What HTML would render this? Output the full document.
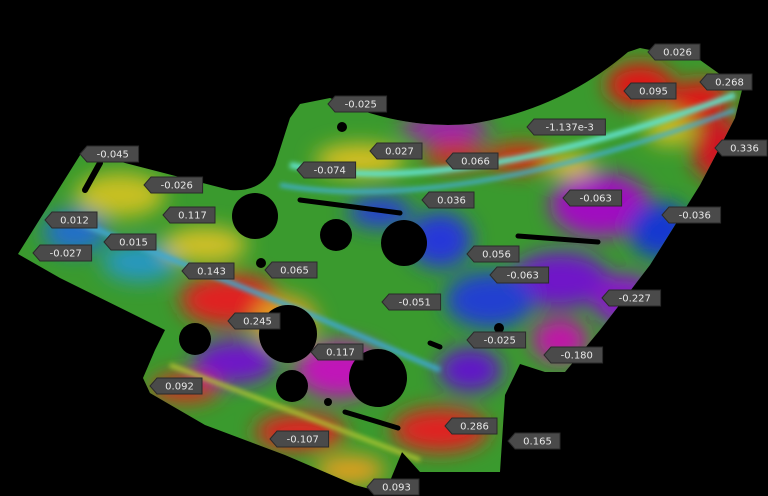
<!DOCTYPE html>
<html><head><meta charset="utf-8"><style>
html,body{margin:0;padding:0;background:#000;width:768px;height:496px;overflow:hidden}
svg{display:block}
text{font-family:"DejaVu Sans","Liberation Sans",sans-serif;font-size:10px;fill:#e8e8e8}
</style></head><body>
<svg width="768" height="496" viewBox="0 0 768 496" xmlns="http://www.w3.org/2000/svg">
<defs>
<clipPath id="part"><path d="M82,152 L160,172 L230,190 Q262,193 275,165 L290,118 L300,104 L330,98 Q400,130 470,124 Q560,110 628,52 L640,48 L700,60 L742,90 L735,118 L700,185 L650,265 L600,330 L565,372 L545,372 L520,364 L505,395 L500,472 L420,472 L402,452 L385,493 L355,485 L285,455 L205,425 L150,393 L143,378 L155,350 L165,330 L60,278 L18,254 Z"/></clipPath>
<filter id="b" x="-50%" y="-50%" width="200%" height="200%"><feGaussianBlur stdDeviation="10"/></filter>
<filter id="b2"><feGaussianBlur stdDeviation="2.5"/></filter>
</defs>
<g clip-path="url(#part)">
<rect width="768" height="496" fill="#3a9a2e"/>
<g filter="url(#b)">
<ellipse cx="640" cy="85" rx="34" ry="22" fill="#e01818"/>
<ellipse cx="700" cy="100" rx="30" ry="20" fill="#e01818"/>
<ellipse cx="720" cy="150" rx="28" ry="32" fill="#d01820"/>
<ellipse cx="670" cy="130" rx="25" ry="15" fill="#d0c020"/>
<ellipse cx="520" cy="158" rx="34" ry="14" fill="#e02818"/>
<ellipse cx="570" cy="165" rx="25" ry="12" fill="#d8c020"/>
<ellipse cx="455" cy="155" rx="32" ry="14" fill="#c83020"/>
<ellipse cx="445" cy="128" rx="45" ry="12" fill="#a818b8"/>
<ellipse cx="600" cy="205" rx="50" ry="32" fill="#a010c0"/>
<ellipse cx="560" cy="280" rx="50" ry="28" fill="#7018c8"/>
<ellipse cx="625" cy="300" rx="32" ry="26" fill="#8818c8"/>
<ellipse cx="560" cy="340" rx="28" ry="22" fill="#c018a8"/>
<ellipse cx="490" cy="300" rx="45" ry="28" fill="#2040d0"/>
<ellipse cx="660" cy="230" rx="32" ry="28" fill="#1838d0"/>
<ellipse cx="440" cy="240" rx="32" ry="28" fill="#2838d8"/>
<ellipse cx="360" cy="160" rx="45" ry="16" fill="#d8c020"/>
<ellipse cx="230" cy="300" rx="50" ry="26" fill="#e02020"/>
<ellipse cx="285" cy="322" rx="32" ry="26" fill="#e0a020"/>
<ellipse cx="120" cy="195" rx="45" ry="22" fill="#c8c020"/>
<ellipse cx="75" cy="232" rx="32" ry="22" fill="#2070c8"/>
<ellipse cx="140" cy="262" rx="38" ry="20" fill="#2898c0"/>
<ellipse cx="205" cy="245" rx="42" ry="18" fill="#d0c028"/>
<ellipse cx="235" cy="362" rx="42" ry="22" fill="#7018c8"/>
<ellipse cx="185" cy="388" rx="35" ry="15" fill="#d03020"/>
<ellipse cx="300" cy="432" rx="45" ry="18" fill="#e02020"/>
<ellipse cx="440" cy="430" rx="48" ry="22" fill="#e02020"/>
<ellipse cx="340" cy="370" rx="45" ry="28" fill="#c018b8"/>
<ellipse cx="470" cy="370" rx="32" ry="22" fill="#6018c8"/>
<ellipse cx="380" cy="212" rx="32" ry="16" fill="#2840d0"/>
<ellipse cx="350" cy="470" rx="35" ry="15" fill="#e0a020"/>
</g>
<g filter="url(#b2)" fill="none">
<path d="M290,165 Q450,200 735,95" stroke="#60e0c8" stroke-width="6"/>
<path d="M280,185 Q450,215 735,110" stroke="#40b0d0" stroke-width="4"/>
<path d="M60,215 L300,310 L440,370" stroke="#40a8d0" stroke-width="5"/>
<path d="M170,365 L420,460" stroke="#b0c830" stroke-width="4"/>
</g>
</g>
<g fill="#000">
<circle cx="255" cy="216" r="23"/><circle cx="336" cy="235" r="16"/><circle cx="404" cy="243" r="23"/>
<circle cx="288" cy="334" r="29"/><circle cx="378" cy="378" r="29"/><circle cx="292" cy="386" r="16"/>
<circle cx="195" cy="339" r="16"/><circle cx="342" cy="127" r="5"/><circle cx="261" cy="263" r="5"/>
<circle cx="499" cy="328" r="5"/><circle cx="328" cy="402" r="4"/>
<path d="M85,190 L100,163" stroke="#000" stroke-width="6" stroke-linecap="round"/>
<path d="M300,200 L400,213" stroke="#000" stroke-width="5" stroke-linecap="round"/>
<path d="M518,236 L598,242" stroke="#000" stroke-width="5" stroke-linecap="round"/>
<path d="M345,412 L398,428" stroke="#000" stroke-width="5" stroke-linecap="round"/>
<path d="M430,343 L440,347" stroke="#000" stroke-width="5" stroke-linecap="round"/>
</g>
<g id="labels">
</g>
</svg>
<script>
var L=[[648,52,"0.026"],[624,91,"0.095"],[700,82,"0.268"],[328,104,"-0.025"],[527,127,"-1.137e-3"],[370,151,"0.027"],[446,161,"0.066"],[715,148,"0.336"],[80,154,"-0.045"],[297,170,"-0.074"],[144,185,"-0.026"],[422,200,"0.036"],[563,198,"-0.063"],[163,215,"0.117"],[662,215,"-0.036"],[45,220,"0.012"],[104,242,"0.015"],[33,253,"-0.027"],[467,254,"0.056"],[182,271,"0.143"],[265,270,"0.065"],[490,275,"-0.063"],[602,298,"-0.227"],[382,302,"-0.051"],[228,321,"0.245"],[467,340,"-0.025"],[311,352,"0.117"],[544,355,"-0.180"],[150,386,"0.092"],[270,439,"-0.107"],[445,426,"0.286"],[508,441,"0.165"],[367,487,"0.093"]];
var g=document.getElementById("labels"),s="";
L.forEach(function(l){var x=l[0],y=l[1],t=l[2],w=t.length*6.6+12;
s+='<path d="M'+x+','+y+' L'+(x+7)+','+(y-8)+' L'+(x+7+w)+','+(y-8)+' L'+(x+7+w)+','+(y+8)+' L'+(x+7)+','+(y+8)+' Z" fill="#4a4a4a" stroke="#2a2a2a" stroke-width="1"/>';
s+='<text x="'+(x+7+w/2)+'" y="'+(y+3.5)+'" text-anchor="middle">'+t+'</text>';});
g.innerHTML=s;
</script>
</body></html>
